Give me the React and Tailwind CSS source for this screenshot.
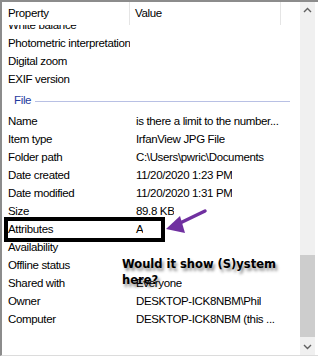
import React from 'react';

const rowsTop = [
  ['White balance', ''],
  ['Photometric interpretation', ''],
  ['Digital zoom', ''],
  ['EXIF version', ''],
];

const fileRows = [
  ['Name', 'is there a limit to the number...'],
  ['Item type', 'IrfanView JPG File'],
  ['Folder path', 'C:\\Users\\pwric\\Documents'],
  ['Date created', '11/20/2020 1:23 PM'],
  ['Date modified', '11/20/2020 1:31 PM'],
  ['Size', '89.8 KB'],
  ['Attributes', 'A'],
  ['Availability', ''],
  ['Offline status', ''],
  ['Shared with', 'Everyone'],
  ['Owner', 'DESKTOP-ICK8NBM\\Phil'],
  ['Computer', 'DESKTOP-ICK8NBM (this ...'],
];

const Row = ({ name, value }) => (
  <div className="flex h-[18px] items-center whitespace-nowrap">
    <div className="w-[128px] pl-[6px] overflow-hidden">{name}</div>
    <div className="pl-[6px] overflow-hidden">{value}</div>
  </div>
);

const Chevron = ({ up }) => (
  <svg width="15" height="17" viewBox="0 0 15 17" className="shrink-0">
    <path
      d={up ? 'M4 10 L7.5 6.5 L11 10' : 'M4 7 L7.5 10.5 L11 7'}
      fill="none"
      stroke="#606060"
      strokeWidth="1.4"
    />
  </svg>
);

export default function App() {
  return (
    <div
      className="relative w-[318px] h-[358px] bg-white text-black text-[11.5px] tracking-[-0.35px] overflow-hidden"
      style={{ fontFamily: '"Liberation Sans", Arial, sans-serif' }}
    >
      <div className="flex h-[356px] border-t-2 border-l-2 border-[#8c8c8c] border-b border-b-[#dcdcdc]">
        {/* List */}
        <div className="flex flex-col w-[298px]">
          <div className="flex h-[23px] shrink-0">
            <div className="w-[128px] pl-[6px] flex items-center border-r border-[#e5e5e5]">Property</div>
            <div className="w-[151px] pl-[5px] flex items-center border-r border-[#e5e5e5]">Value</div>
          </div>
          <div className="flex-1 overflow-hidden">
            <div className="-mt-[8px]">
              {rowsTop.map(([n, v]) => (
                <Row key={n} name={n} value={v} />
              ))}
              <div className="flex h-[24px] items-center pl-[12px] pr-[10px] gap-[4px]">
                <span className="text-[#1f3a9e]">File</span>
                <div className="flex-1 h-px bg-[#b8c0e4]" />
              </div>
              {fileRows.map(([n, v]) => (
                <Row key={n} name={n} value={v} />
              ))}
            </div>
          </div>
        </div>
        {/* Scrollbar */}
        <div className="w-[15px] flex flex-col bg-[#f0f0f0]">
          <Chevron up />
          <div className="flex-1 flex flex-col justify-end pb-[1px]">
            <div className="h-[82px] bg-[#cdcdcd]" />
          </div>
          <Chevron />
        </div>
      </div>

      {/* Annotation overlay */}
      <div className="absolute left-[4px] top-[217px] w-[161px] h-[25px] border-[4px] border-black" />
      <svg className="absolute left-0 top-0" width="318" height="358">
        <line x1="205" y1="211" x2="178" y2="224" stroke="#7030a0" strokeWidth="3.5" strokeLinecap="round" />
        <polygon points="166,229 180,216 185,233" fill="#7030a0" />
      </svg>
      <div
        className="absolute left-[122px] top-[256px] text-[11.5px] tracking-[0px] font-bold leading-[16px] text-black"
        style={{ fontFamily: 'Verdana, "DejaVu Sans", sans-serif', textShadow: '2px 3px 3px rgba(0,0,0,0.45)' }}
      >
        Would it show (S)ystem
        <br />
        here?
      </div>
    </div>
  );
}
